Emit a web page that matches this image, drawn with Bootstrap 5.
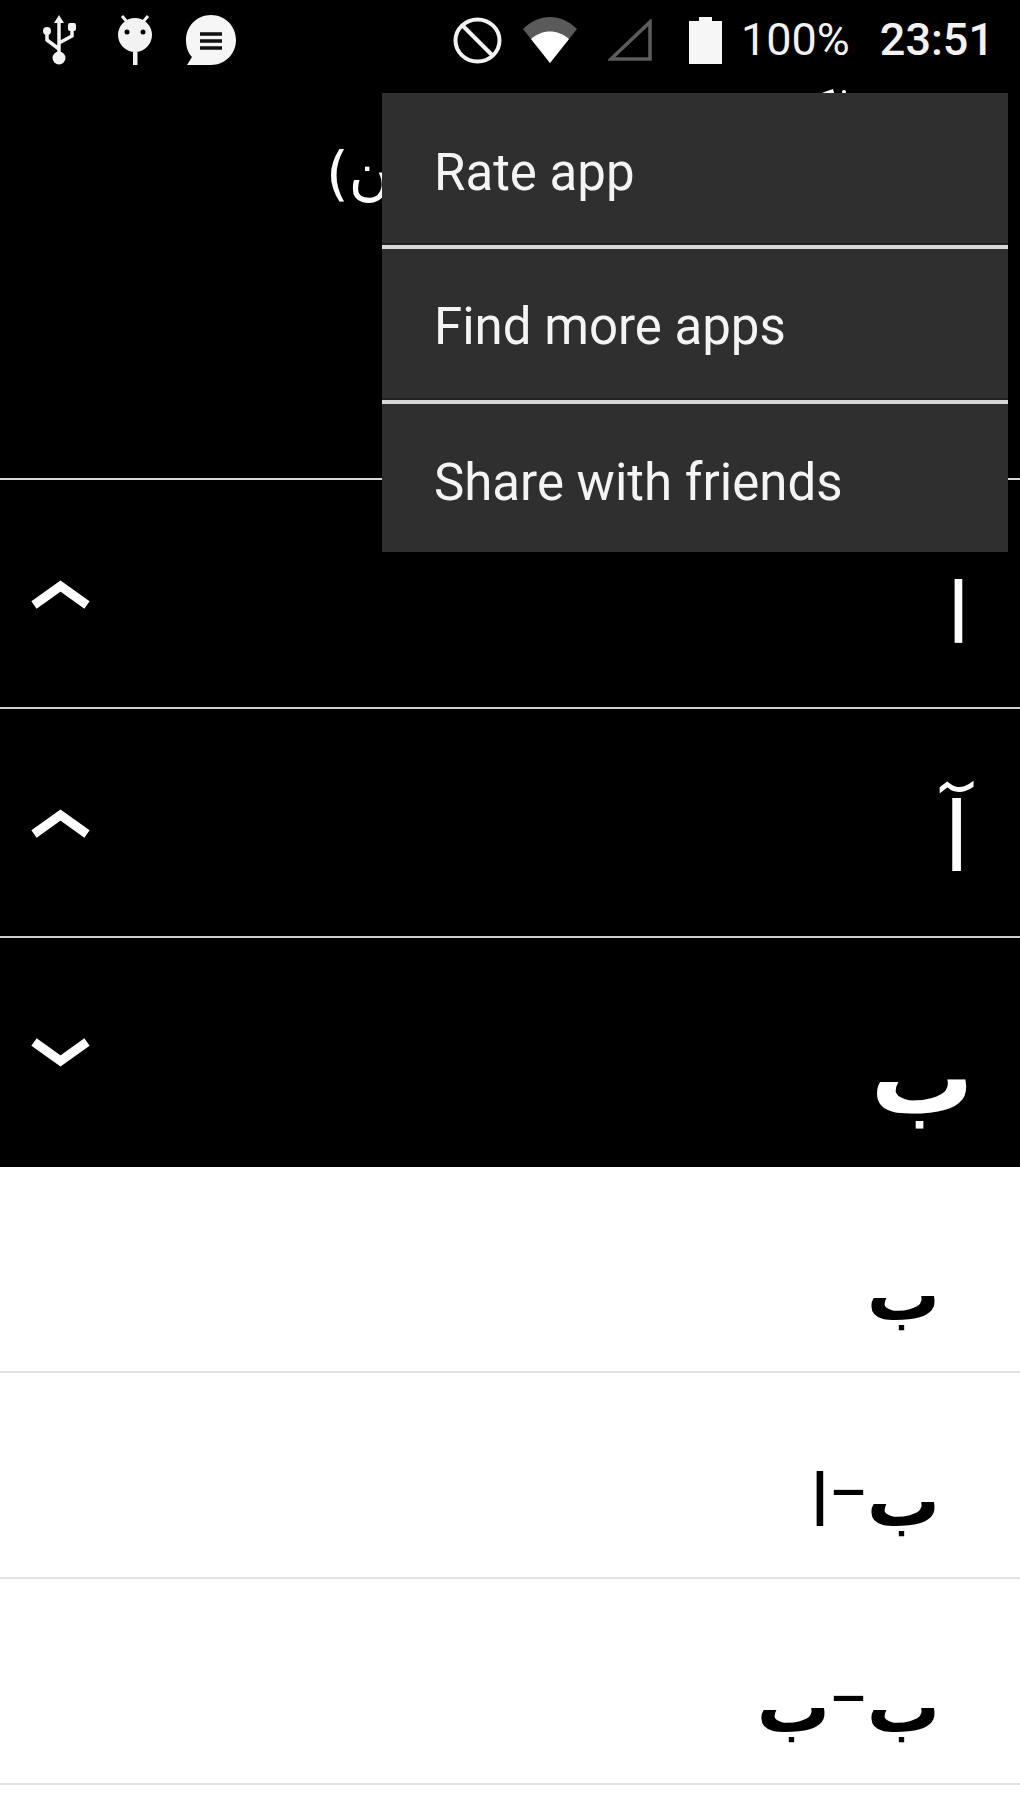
<!DOCTYPE html>
<html lang="en">
<head>
    <meta charset="UTF-8">
    <meta name="viewport" content="width=device-width, initial-scale=1.0">
    <title>Urdu Dictionary</title>
    <link href="https://cdn.jsdelivr.net/npm/bootstrap@5.3.0/dist/css/bootstrap.min.css" rel="stylesheet">
    <style>
        body { background: #fff; font-family: Roboto, sans-serif; width: 1020px; height: 1813px; overflow: hidden; }
        .app-shell { width: 1020px; height: 1813px; overflow: hidden; }
        .status-bar { height: 80px; padding: 0 26px 0 42px; color: #f2f2f2; }
        .status-usb { margin-right: 40px; }
        .status-droid { margin-right: 32px; }
        .ic-wifi { margin-left: 21px; }
        .ic-signal { margin-left: 31px; }
        .ic-batt { margin-left: 37px; }
        .status-batt { font-size: 45px; margin-left: 19px; }
        .status-time { font-size: 45px; font-weight: 500; margin-left: 30px; }
        .top-head { background: #000; height: 480px; border-bottom: 2px solid #d8d8d8; }
        .head-title { height: 397px; padding-top: 65px; padding-left: 326px; color: #fff; font-family: "DejaVu Sans", sans-serif; font-size: 58px; line-height: 1; }
        .letter-row { height: 229px; background: #000; border-bottom: 2px solid #cfcfcf; padding: 0 50px 0 31px; color: #fff; }
        .letter-row.is-open { border-bottom: 0; }
        .letter-big { font-family: "DejaVu Sans", sans-serif; font-size: 84px; line-height: 1; }
        .letter-alif { padding-top: 40px; }
        .letter-madda { font-size: 96px; padding-top: 30px; }
        .letter-beh { font-size: 103px; font-weight: 700; padding-top: 50px; margin-right: -4px; }
        .word-row { height: 206px; background: #fff; border-bottom: 2px solid #e2e2e2; padding-right: 80px; color: #000; }
        .word-text { font-family: "DejaVu Sans", sans-serif; font-size: 73px; line-height: 1; font-weight: 700; padding-top: 50px; }
        .word-thin { font-weight: 400; }
        .word-dash { font-weight: 400; vertical-align: 14px; line-height: 0; }
        .over-menu { left: 382px; top: 93px; width: 626px; background: #2f2f2f; color: #f4f4f4; font-size: 51px; }
        .over-item { padding-left: 52px; padding-top: 5px; border-bottom: 4px solid #d8d8d8; box-shadow: inset 0 -2px 0 #222; }
        .over-item:nth-child(1) { height: 156px; padding-top: 9px; }
        .over-item:nth-child(2) { height: 155px; }
        .over-item:nth-child(3) { height: 148px; padding-top: 10px; border-bottom: 0; box-shadow: none; }
        .title-bits { left: 818px; top: 87px; }
    </style>
</head>
<body>
<div class="app-shell position-relative">
    <div class="top-head">
        <div class="status-bar d-flex align-items-center justify-content-between">
            <div class="d-flex align-items-center">
                <svg class="status-usb" width="34" height="50" viewBox="0 0 34 50" fill="none" stroke="#f2f2f2" stroke-width="3.5">
                    <path d="M17 6V44M17 34L5 25V17M17 28L30 21V13"/>
                    <path d="M17 0L22 8H12Z" fill="#f2f2f2" stroke="none"/>
                    <circle cx="17" cy="43" r="6.5" fill="#f2f2f2" stroke="none"/>
                    <circle cx="5" cy="16" r="4" fill="#f2f2f2" stroke="none"/>
                    <rect x="26" y="8" width="8" height="8" rx="2" fill="#f2f2f2" stroke="none"/>
                </svg>
                <svg class="status-droid" width="38" height="50" viewBox="0 0 38 50">
                    <path d="M6 1L12 8M32 1L26 8" stroke="#f2f2f2" stroke-width="3"/>
                    <circle cx="19" cy="20" r="17" fill="#f2f2f2"/>
                    <circle cx="11" cy="17" r="2.5" fill="#000"/>
                    <circle cx="27" cy="17" r="2.5" fill="#000"/>
                    <rect x="17" y="37" width="4.500" height="13" fill="#f2f2f2"/>
                </svg>
                <svg width="50" height="51" viewBox="0 0 50 51">
                    <path d="M25 0C39 0 50 11 50 25S39 50 25 50H1L6 42C2 38 0 32 0 25 0 11 11 0 25 0Z" fill="#f6f6f6"/>
                    <path d="M14 19H36M14 26H36M14 33H36" stroke="#111" stroke-width="3.5"/>
                </svg>
            </div>
            <div class="d-flex align-items-center">
                <svg width="49" height="47" viewBox="0 0 49 47" fill="none" stroke="#f2f2f2" stroke-width="4">
                    <ellipse cx="24.500" cy="23.500" rx="22" ry="21"/>
                    <path d="M9 8L40 39"/>
                </svg>
                <svg class="ic-wifi" width="54" height="46" viewBox="0 0 54 46">
                    <path d="M0 12C16 -4 38 -4 54 12L27 46Z" fill="#5a5a5a"/>
                    <path d="M8 22C19 12 35 12 46 22L27 46Z" fill="#fff"/>
                </svg>
                <svg class="ic-signal" width="44" height="42" viewBox="0 0 44 42" fill="none" stroke="#5c5c5c" stroke-width="3.500">
                    <path d="M3 40L42 3V40Z"/>
                </svg>
                <svg class="ic-batt" width="33" height="47" viewBox="0 0 33 47">
                    <path d="M10 0H23V4H33V47H0V4H10Z" fill="#f6f6f6"/>
                </svg>
                <span class="status-batt">100%</span>
                <span class="status-time">23:51</span>
            </div>
        </div>
        <div class="head-title" dir="ltr"><span dir="rtl">ن)</span></div>
    </div>

    <div class="letter-row d-flex align-items-center justify-content-between">
        <svg width="59" height="30" viewBox="0 0 59 30" fill="none" stroke="#fff" stroke-width="9"><path d="M3 26L29.500 7L56 26"/></svg>
        <span class="letter-big letter-alif" dir="rtl">ا</span>
    </div>
    <div class="letter-row d-flex align-items-center justify-content-between">
        <svg width="59" height="30" viewBox="0 0 59 30" fill="none" stroke="#fff" stroke-width="9"><path d="M3 26L29.500 7L56 26"/></svg>
        <span class="letter-big letter-madda" dir="rtl">آ</span>
    </div>
    <div class="letter-row is-open d-flex align-items-center justify-content-between">
        <svg width="59" height="30" viewBox="0 0 59 30" fill="none" stroke="#fff" stroke-width="9"><path d="M3 4L29.500 23L56 4"/></svg>
        <span class="letter-big letter-beh" dir="rtl">ب</span>
    </div>

    <div class="word-row d-flex align-items-center justify-content-end"><span class="word-text" dir="rtl">ب</span></div>
    <div class="word-row d-flex align-items-center justify-content-end"><span class="word-text" dir="rtl">ب<span class="word-dash">–</span><span class="word-thin">ا</span></span></div>
    <div class="word-row d-flex align-items-center justify-content-end"><span class="word-text" dir="rtl">ب<span class="word-dash">–</span>ب</span></div>

    <svg class="title-bits position-absolute" width="30" height="8" viewBox="0 0 30 8">
        <path d="M1 7L15 2L16 6Z" fill="#fff"/>
        <circle cx="26" cy="5" r="2" fill="#fff"/>
    </svg>

    <div class="over-menu position-absolute">
        <div class="over-item d-flex align-items-center">Rate app</div>
        <div class="over-item d-flex align-items-center">Find more apps</div>
        <div class="over-item d-flex align-items-center">Share with friends</div>
    </div>
</div>
<script src="https://cdn.jsdelivr.net/npm/bootstrap@5.3.0/dist/js/bootstrap.bundle.min.js"></script>
</body>
</html>
